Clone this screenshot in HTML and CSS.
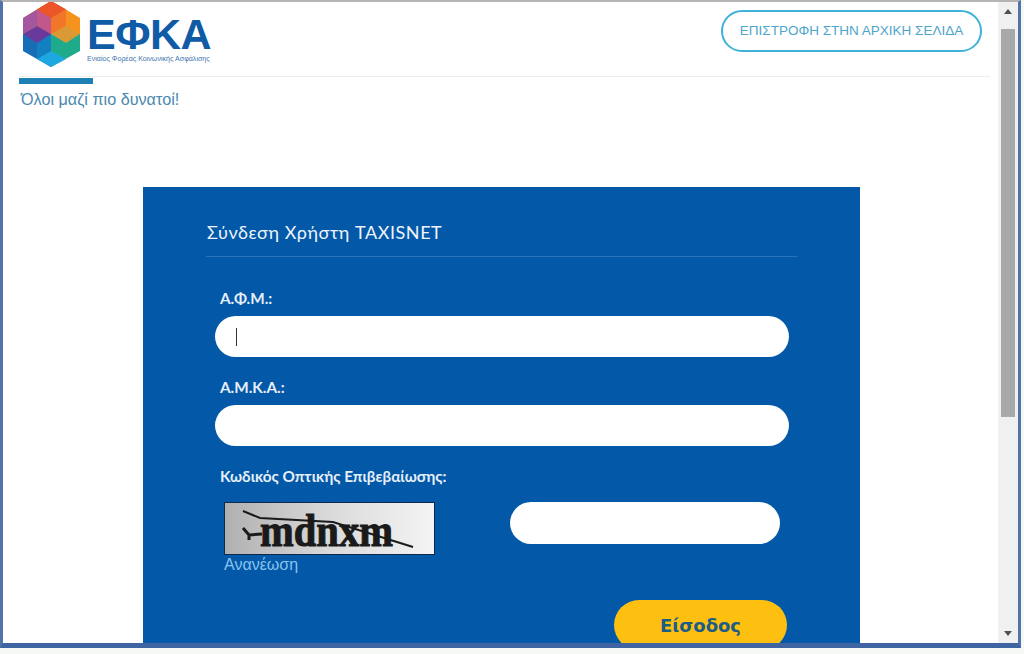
FILE: index.html
```html
<!DOCTYPE html>
<html lang="el">
<head>
  <meta charset="UTF-8" />
  <title>ΕΦΚΑ - Σύνδεση Χρήστη</title>
  <link rel="stylesheet" href="styles.css">
</head>
<body>
  <div class="window">
    <div class="page">
      <div class="header">
        <div class="logo">
          <svg class="logo-mark" width="58" height="66" viewBox="0 0 58 66">
            <polygon points="28,0 43,8.500 57,17 57,33 28,33 0,33 0,17 14,8.500" fill="#f6921e"/>
            <polygon points="0,17 14,8.500 28,17 28,33 14,25 0,33" fill="#a4569f"/>
            <polygon points="28,0 43,8.500 28,17 28,33 14,25 14,8.500" fill="#c2578c"/>
            <polygon points="28,0 43,8.500 28,17 14,8.500" fill="#ec5527"/>
            <polygon points="28,17 43,8.500 43,25 28,33" fill="#f2762a"/>
            <polygon points="0,33 28,33 28,66 0,50" fill="#176db6"/>
            <polygon points="28,33 57,33 57,50 28,66" fill="#1faa8c"/>
            <polygon points="14,42 28,33 28,50 14,58" fill="#1380c4"/>
            <polygon points="14,58 28,50 43,58 28,66" fill="#1ea8e2"/>
            <polygon points="14,25 28,33 14,42 0,33" fill="#6a399c"/>
            <polygon points="28,33 43,25 57,33 43,42" fill="#d99a36"/>
          </svg>
          <div class="logo-text">
            <div class="logo-name">ΕΦΚΑ</div>
            <div class="logo-sub">Ενιαίος Φορέας Κοινωνικής Ασφάλισης</div>
          </div>
        </div>
        <a class="back-btn">ΕΠΙΣΤΡΟΦΗ ΣΤΗΝ ΑΡΧΙΚΗ ΣΕΛΙΔΑ</a>
      </div>
      <div class="accent"></div>
      <p class="slogan">Όλοι μαζί πιο δυνατοί!</p>

      <div class="login-panel">
        <h2 class="login-title">Σύνδεση Χρήστη TAXISNET</h2>
        <div class="fields">
          <label class="field-label">Α.Φ.Μ.:</label>
          <div class="text-input"><span class="caret"></span></div>
          <label class="field-label">Α.Μ.Κ.Α.:</label>
          <div class="text-input"></div>
          <label class="field-label">Κωδικός Οπτικής Επιβεβαίωσης:</label>
          <div class="captcha-row">
            <div class="captcha-col">
              <svg class="captcha" width="209" height="51" viewBox="0 0 209 51">
                <defs>
                  <linearGradient id="captchaBg" x1="0" x2="1" y1="0" y2="0">
                    <stop offset="0" stop-color="#b0b0b0"/>
                    <stop offset="0.5" stop-color="#dadada"/>
                    <stop offset="1" stop-color="#f4f4f4"/>
                  </linearGradient>
                </defs>
                <rect width="209" height="51" fill="url(#captchaBg)"/>
                <text class="captcha-text" x="35" y="43" textLength="133" lengthAdjust="spacingAndGlyphs">mdnxm</text>
                <path d="M18 8 L35 15 L108 19 L188 44" fill="none" stroke="#1a1a1a" stroke-width="2"/>
                <path d="M18 25 L24 32 L37 31 M24 32 L24 37" fill="none" stroke="#1a1a1a" stroke-width="3"/>
              </svg>
              <a class="refresh">Ανανέωση</a>
            </div>
            <div class="text-input captcha-input"></div>
          </div>
        </div>
        <div class="actions">
          <button class="submit-btn">Είσοδος</button>
        </div>
      </div>
    </div>
    <div class="scrollbar">
      <span class="arrow-up"></span>
      <div class="thumb"></div>
      <span class="arrow-down"></span>
    </div>
  </div>
</body>
</html>
```

FILE: styles.css
```css
html, body {
  margin: 0;
  height: 654px;
  overflow: hidden;
  background: #f6f8f6;
  font-family: "Open Sans", "Liberation Sans", sans-serif;
}
.window {
  display: flex;
  width: 1021px;
  height: 648px;
  box-sizing: border-box;
  border-left: 3px solid #4f74ab;
  border-right: 3px solid #4f74ab;
  border-top: 2px solid #b4b4b4;
  border-bottom: 5px solid #3f64a2;
  background: white;
}
.page {
  width: 995px;
  height: 641px;
  overflow: hidden;
  flex: none;
}
.header {
  display: flex;
  justify-content: space-between;
  height: 74px;
  margin: 0 8px 0 16px;
  border-bottom: 1px solid #eeeeee;
}
.logo {
  display: flex;
  margin-left: 4px;
  align-items: flex-start;
}
.logo-mark {
  margin-top: -1px;
}
.logo-text {
  margin-left: 6px;
  margin-top: 11px;
}
.logo-name {
  font-family: "Liberation Sans", Arial, sans-serif;
  font-weight: bold;
  font-size: 43px;
  line-height: 42px;
  letter-spacing: -0.5px;
  color: #0f5ba6;
}
.logo-sub {
  font-family: "Liberation Sans", Arial, sans-serif;
  font-size: 7.100px;
  line-height: 8px;
  color: #3f73ad;
  white-space: nowrap;
}
.back-btn {
  box-sizing: border-box;
  width: 261px;
  height: 42px;
  margin: 8px 8px 0 0;
  border: 2px solid #3fb2da;
  border-radius: 21px;
  text-align: center;
  line-height: 38px;
  font-family: "Liberation Sans", Arial, sans-serif;
  font-size: 13.500px;
  color: #4da5ca;
}
.accent {
  width: 74px;
  height: 6px;
  margin: 1px 0 0 16px;
  background: #1f80b8;
}
.slogan {
  margin: 5px 0 0 18px;
  font-family: "Liberation Sans", Arial, sans-serif;
  font-size: 16.200px;
  line-height: 20px;
  color: #4a88ae;
}
.login-panel {
  box-sizing: border-box;
  width: 717px;
  height: 470px;
  margin: 78px 0 0 140px;
  padding: 33px 63px 0;
  background: #0358a8;
}
.login-title {
  margin: 0;
  padding: 0 0 11px 1px;
  font-family: "Lato", "Open Sans", sans-serif;
  font-weight: 400;
  font-size: 18px;
  line-height: 25px;
  letter-spacing: 0.55px;
  color: #eef4fb;
  border-bottom: 1px solid #2a74bd;
}
.fields {
  padding: 31px 8px 0 9px;
}
.field-label {
  display: block;
  margin: 0 0 8px 5px;
  font-family: "Lato", "Open Sans", sans-serif;
  font-weight: 700;
  font-size: 15.300px;
  line-height: 20px;
  color: #e6eff8;
}
.text-input {
  display: flex;
  align-items: center;
  box-sizing: border-box;
  height: 41px;
  margin-bottom: 20px;
  padding-left: 21px;
  border-radius: 21px;
  background: white;
}
.caret {
  width: 1px;
  height: 18px;
  background: #333333;
}
.captcha-row {
  display: flex;
  justify-content: space-between;
  align-items: flex-start;
  margin-top: 16px;
  padding: 0 9px;
}
.captcha-col {
  display: flex;
  flex-direction: column;
}
.captcha {
  box-sizing: content-box;
  border: 1px solid #0d2a4a;
}
.captcha-text {
  font-family: "Liberation Serif", serif;
  font-weight: bold;
  font-size: 46px;
  fill: #1a1a1a;
  stroke: #1a1a1a;
  stroke-width: 1px;
}
.refresh {
  margin-top: 0;
  font-family: "Liberation Sans", Arial, sans-serif;
  font-size: 16px;
  line-height: 20px;
  color: #8ac4ee;
}
.captcha-input {
  width: 270px;
  height: 42px;
  margin: 0;
}
.actions {
  display: flex;
  justify-content: flex-end;
  margin-top: 25px;
  padding-right: 10px;
}
.submit-btn {
  width: 173px;
  height: 50px;
  border: none;
  border-radius: 25px;
  background: #fdc010;
  font-family: "DejaVu Sans", sans-serif;
  font-weight: bold;
  font-size: 18px;
  color: #1d5c85;
}
.scrollbar {
  display: flex;
  flex-direction: column;
  align-items: center;
  flex: 1;
  background: #f0f0f0;
}
.thumb {
  width: 14px;
  height: 388px;
  margin-top: 15px;
  background: #a8a8a8;
}
.arrow-up, .arrow-down {
  width: 0;
  height: 0;
  border-left: 4px solid transparent;
  border-right: 4px solid transparent;
}
.arrow-up {
  margin-top: 7px;
  border-bottom: 5px solid #505050;
}
.arrow-down {
  margin-top: auto;
  margin-bottom: 7px;
  border-top: 5px solid #505050;
}
```
